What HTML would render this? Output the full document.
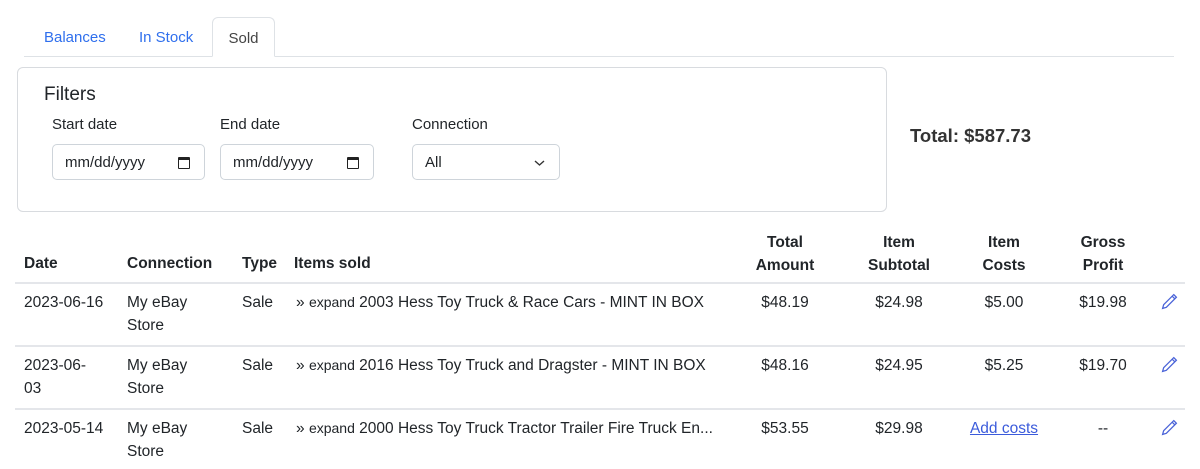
<!DOCTYPE html>
<html><head><meta charset="utf-8">
<style>
*{box-sizing:border-box;margin:0;padding:0}
body{width:1200px;height:469px;overflow:hidden;background:#fff;font-family:"Liberation Sans",sans-serif;color:#212529;font-size:15.5px;position:relative}
.a{position:absolute;white-space:nowrap}
.tabs{position:absolute;left:24px;top:56px;width:1150px;border-top:1px solid #dee2e6}
.tab{position:absolute;top:17px;height:40px;line-height:42px;font-size:15px;color:#2f6fed}
.sold{left:212px;width:63px;border:1px solid #dee2e6;border-bottom:1px solid #fff;border-radius:6px 6px 0 0;color:#444;text-align:center;background:#fff}
.card{position:absolute;left:17px;top:67px;width:870px;height:145px;border:1px solid #d8dbdf;border-radius:6px}
.inp{position:absolute;top:144px;height:36px;border:1px solid #ced4da;border-radius:5px;padding:0 12px;line-height:36px;font-size:15px}
.cal{position:absolute;right:14px;top:12px;width:12px;height:12px;border:1.5px solid #222;border-top-width:3px;border-radius:1px}
.hl{position:absolute;left:15px;width:1170px;border-top:2px solid #e4e6ea}
.th{font-weight:bold}
.c{text-align:center;transform:translateX(-50%)}
.r{line-height:23px}
</style></head><body>
<div class="tabs"></div>
<div class="tab" style="left:44px">Balances</div>
<div class="tab" style="left:139px">In Stock</div>
<div class="tab sold">Sold</div>
<div class="card"></div>
<div class="a" style="left:44px;top:84px;font-size:19px">Filters</div>
<div class="a" style="left:52px;top:116px;font-size:15px">Start date</div>
<div class="a" style="left:220px;top:116px;font-size:15px">End date</div>
<div class="a" style="left:412px;top:116px;font-size:15px">Connection</div>
<div class="inp" style="left:52px;width:153px">mm/dd/yyyy<span class="cal"></span></div>
<div class="inp" style="left:220px;width:154px">mm/dd/yyyy<span class="cal"></span></div>
<div class="inp" style="left:412px;width:148px">All<svg style="position:absolute;right:14px;top:14px" width="11" height="8" viewBox="0 0 11 8"><path d="M1 2l4.5 4 4.5-4" fill="none" stroke="#333" stroke-width="1.4"/></svg></div>
<div class="a" style="left:910px;top:125px;font-size:18.5px;font-weight:bold;color:#333">Total: $587.73</div>

<div class="a th" style="left:24px;top:255px">Date</div>
<div class="a th" style="left:127px;top:255px">Connection</div>
<div class="a th" style="left:242px;top:255px">Type</div>
<div class="a th" style="left:294px;top:255px">Items sold</div>
<div class="a th c r" style="left:785px;top:231px">Total<br>Amount</div>
<div class="a th c r" style="left:899px;top:231px">Item<br>Subtotal</div>
<div class="a th c r" style="left:1004px;top:231px">Item<br>Costs</div>
<div class="a th c r" style="left:1103px;top:231px">Gross<br>Profit</div>
<div class="hl" style="top:282px"></div>
<div class="hl" style="top:345px"></div>
<div class="hl" style="top:408px"></div>

<div class="a r" style="left:24px;top:291px">2023-06-16</div>
<div class="a r" style="left:127px;top:291px">My eBay<br>Store</div>
<div class="a r" style="left:242px;top:291px">Sale</div>
<div class="a r" style="left:296px;top:291px">» <span style="font-size:14px">expand</span> 2003 Hess Toy Truck &amp; Race Cars - MINT IN BOX</div>
<div class="a c r" style="left:785px;top:291px">$48.19</div>
<div class="a c r" style="left:899px;top:291px">$24.98</div>
<div class="a c r" style="left:1004px;top:291px">$5.00</div>
<div class="a c r" style="left:1103px;top:291px">$19.98</div>

<div class="a r" style="left:24px;top:354px">2023-06-<br>03</div>
<div class="a r" style="left:127px;top:354px">My eBay<br>Store</div>
<div class="a r" style="left:242px;top:354px">Sale</div>
<div class="a r" style="left:296px;top:354px">» <span style="font-size:14px">expand</span> 2016 Hess Toy Truck and Dragster - MINT IN BOX</div>
<div class="a c r" style="left:785px;top:354px">$48.16</div>
<div class="a c r" style="left:899px;top:354px">$24.95</div>
<div class="a c r" style="left:1004px;top:354px">$5.25</div>
<div class="a c r" style="left:1103px;top:354px">$19.70</div>

<div class="a r" style="left:24px;top:417px">2023-05-14</div>
<div class="a r" style="left:127px;top:417px">My eBay<br>Store</div>
<div class="a r" style="left:242px;top:417px">Sale</div>
<div class="a r" style="left:296px;top:417px">» <span style="font-size:14px">expand</span> 2000 Hess Toy Truck Tractor Trailer Fire Truck En...</div>
<div class="a c r" style="left:785px;top:417px">$53.55</div>
<div class="a c r" style="left:899px;top:417px">$29.98</div>
<div class="a c r" style="left:1004px;top:417px;color:#3b5bdb;text-decoration:underline">Add costs</div>
<div class="a c r" style="left:1103px;top:417px">--</div>

<svg class="a" style="left:1161px;top:293px" width="17" height="17" viewBox="0 0 16 16"><path d="M12 1.5l2.5 2.5L5 13.5 1.5 14.5 2.5 11z M10.5 3l2.5 2.5" fill="none" stroke="#4a63d8" stroke-width="1.2"/></svg>
<svg class="a" style="left:1161px;top:356px" width="17" height="17" viewBox="0 0 16 16"><path d="M12 1.5l2.5 2.5L5 13.5 1.5 14.5 2.5 11z M10.5 3l2.5 2.5" fill="none" stroke="#4a63d8" stroke-width="1.2"/></svg>
<svg class="a" style="left:1161px;top:419px" width="17" height="17" viewBox="0 0 16 16"><path d="M12 1.5l2.5 2.5L5 13.5 1.5 14.5 2.5 11z M10.5 3l2.5 2.5" fill="none" stroke="#4a63d8" stroke-width="1.2"/></svg>
</body></html>
